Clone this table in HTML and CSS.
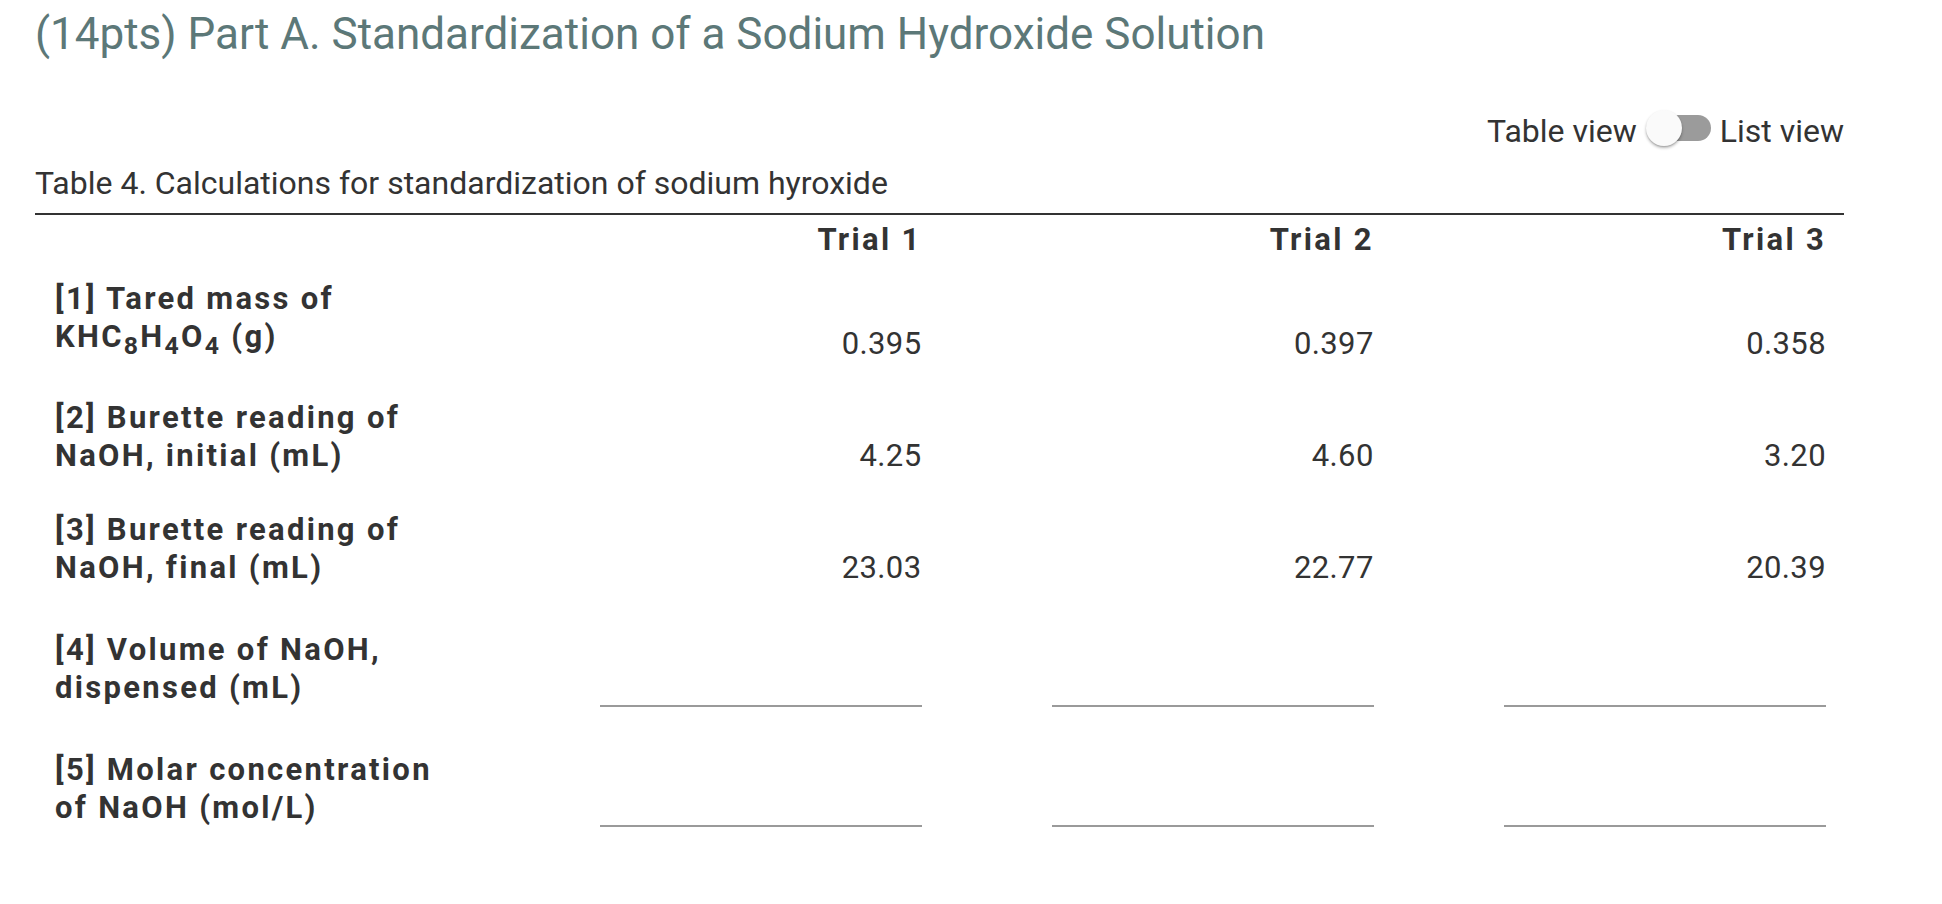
FILE: index.html
```html
<!DOCTYPE html>
<html lang="en">
<head>
<meta charset="utf-8">
<title>Part A. Standardization of a Sodium Hydroxide Solution</title>
<link rel="stylesheet" href="styles.css">
</head>
<body>
<main class="page">
  <h1 class="title">(14pts) Part A. Standardization of a Sodium Hydroxide Solution</h1>

  <div class="view-toggle">
    <span class="toggle-label">Table view</span>
    <span class="switch" role="switch" aria-checked="false">
      <span class="switch-track"></span>
      <span class="switch-knob"></span>
    </span>
    <span class="toggle-label">List view</span>
  </div>

  <div class="caption">Table 4. Calculations for standardization of sodium hyroxide</div>

  <table class="data-table">
    <colgroup>
      <col class="col">
      <col class="col">
      <col class="col">
      <col class="col">
    </colgroup>
    <thead>
      <tr>
        <th></th>
        <th>Trial 1</th>
        <th>Trial 2</th>
        <th>Trial 3</th>
      </tr>
    </thead>
    <tbody>
      <tr>
        <td class="label">[1] Tared mass of<br>KHC<sub>8</sub>H<sub>4</sub>O<sub>4</sub> (g)</td>
        <td class="value">0.395</td>
        <td class="value">0.397</td>
        <td class="value">0.358</td>
      </tr>
      <tr>
        <td class="label">[2] Burette reading of<br>NaOH, initial (mL)</td>
        <td class="value">4.25</td>
        <td class="value">4.60</td>
        <td class="value">3.20</td>
      </tr>
      <tr>
        <td class="label">[3] Burette reading of<br>NaOH, final (mL)</td>
        <td class="value">23.03</td>
        <td class="value">22.77</td>
        <td class="value">20.39</td>
      </tr>
      <tr class="input-row">
        <td class="label">[4] Volume of NaOH,<br>dispensed (mL)</td>
        <td class="value"><div class="blank"></div></td>
        <td class="value"><div class="blank"></div></td>
        <td class="value"><div class="blank"></div></td>
      </tr>
      <tr class="input-row">
        <td class="label">[5] Molar concentration<br>of NaOH (mol/L)</td>
        <td class="value"><div class="blank"></div></td>
        <td class="value"><div class="blank"></div></td>
        <td class="value"><div class="blank"></div></td>
      </tr>
    </tbody>
  </table>
</main>
</body>
</html>
```
FILE: styles.css
```css
html, body {
  margin: 0;
  padding: 0;
  background: #ffffff;
}

body {
  font-family: Roboto, "Noto Sans", "Liberation Sans", sans-serif;
  color: #333333;
}

.page {
  width: 1809px;
  margin-left: 35px;
}

.title {
  margin: 8px 0 0;
  font-size: 44px;
  line-height: 52px;
  font-weight: 400;
  color: #5c7878;
}

.view-toggle {
  display: flex;
  justify-content: flex-end;
  align-items: center;
  gap: 9px;
  height: 38px;
  margin-top: 49px;
  font-size: 32px;
  line-height: 38px;
  color: #333333;
}

.toggle-label {
  padding-top: 6px;
}

.switch {
  position: relative;
  display: block;
  width: 65px;
  height: 38px;
  flex: none;
}

.switch-track {
  position: absolute;
  left: 7px;
  right: 0;
  top: 6px;
  height: 26px;
  border-radius: 13px;
  background: #9b9b9b;
}

.switch-knob {
  position: absolute;
  left: 0;
  top: 1px;
  width: 36px;
  height: 36px;
  border-radius: 50%;
  background: #fafafa;
  box-shadow: 0 2px 3px rgba(0, 0, 0, 0.28), 0 1px 1px rgba(0, 0, 0, 0.12);
}

.caption {
  margin-top: 17px;
  padding-bottom: 11px;
  border-bottom: 2px solid #333333;
  font-size: 32px;
  line-height: 38px;
}

.data-table {
  width: 100%;
  border-collapse: collapse;
  border-spacing: 0;
  table-layout: fixed;
}

.col {
  width: 25%;
}

.data-table th {
  padding: 6px 18px 3px 21px;
  font-size: 31px;
  line-height: 38px;
  font-weight: 700;
  letter-spacing: 2.3px;
  text-align: right;
}

.data-table td {
  padding: 18px 18px 18px 20px;
  font-size: 31px;
  line-height: 38px;
  vertical-align: bottom;
}

.data-table td.label {
  text-align: left;
  font-weight: 700;
  letter-spacing: 2.3px;
}

.data-table td.value {
  text-align: right;
  letter-spacing: 0.4px;
}

.data-table sub {
  font-size: 0.8em;
  line-height: 34px;
  vertical-align: sub;
}

.input-row td {
  padding-top: 26px;
}

.blank {
  width: 322px;
  height: 36px;
  margin-left: auto;
  border-bottom: 2px solid #9a9a9a;
}
```
